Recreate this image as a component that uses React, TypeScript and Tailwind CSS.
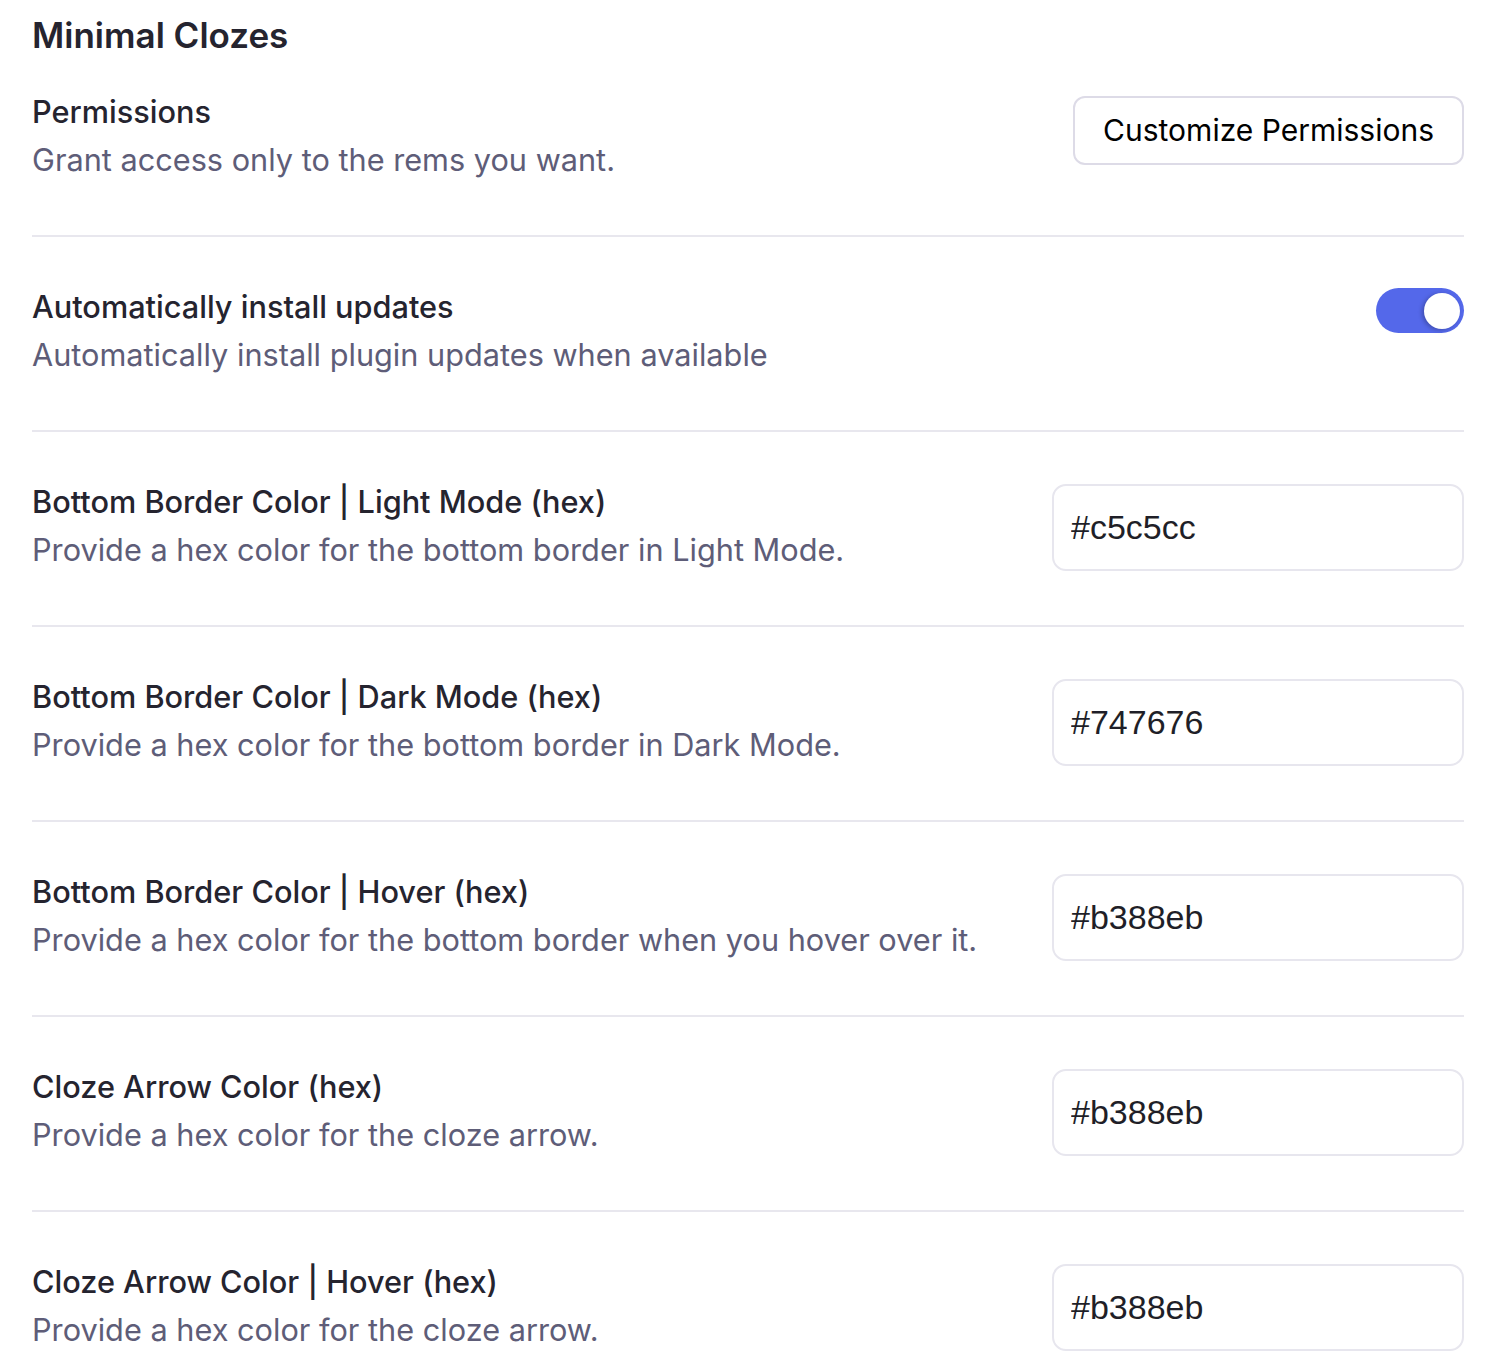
import { useState } from "react";

interface Setting {
  label: string;
  description: string;
  value: string;
}

const HEX_SETTINGS: Setting[] = [
  {
    label: "Bottom Border Color | Light Mode (hex)",
    description: "Provide a hex color for the bottom border in Light Mode.",
    value: "#c5c5cc",
  },
  {
    label: "Bottom Border Color | Dark Mode (hex)",
    description: "Provide a hex color for the bottom border in Dark Mode.",
    value: "#747676",
  },
  {
    label: "Bottom Border Color | Hover (hex)",
    description: "Provide a hex color for the bottom border when you hover over it.",
    value: "#b388eb",
  },
  {
    label: "Cloze Arrow Color (hex)",
    description: "Provide a hex color for the cloze arrow.",
    value: "#b388eb",
  },
  {
    label: "Cloze Arrow Color | Hover (hex)",
    description: "Provide a hex color for the cloze arrow.",
    value: "#b388eb",
  },
];

function Label({ title, description }: { title: string; description: string }) {
  return (
    <div className="flex flex-col">
      <div className="text-[30.7px] leading-[40px] font-medium text-[#25242f]">{title}</div>
      <div className="mt-[8px] text-[30.7px] leading-[40px] text-[#5e5d78]">{description}</div>
    </div>
  );
}

function HexInput({ initial }: { initial: string }) {
  const [value, setValue] = useState(initial);
  return (
    <input
      value={value}
      onChange={(e) => setValue(e.target.value)}
      className="mt-[2px] h-[87px] w-[412px] shrink-0 rounded-[14px] border-2 border-[#e7e6ee] bg-white px-[17px] text-[34px] text-[#1f1f28] outline-none"
      style={{ fontFamily: '"Liberation Sans", Arial, sans-serif' }}
    />
  );
}

export default function App() {
  const [autoUpdate, setAutoUpdate] = useState(true);

  return (
    <div className="min-h-screen bg-white pl-[32px] pr-[40px] pt-[15px]" style={{ fontFamily: "Inter, sans-serif" }}>
      <h1 className="text-[35px] leading-[40px] font-semibold text-[#25242f]">Minimal Clozes</h1>

      {/* Permissions */}
      <div className="flex items-start justify-between border-b-2 border-[#e8e7ee] pt-[37px] pb-[55px]">
        <Label title="Permissions" description="Grant access only to the rems you want." />
        <button className="mt-[4px] h-[69px] rounded-[12px] border-2 border-[#dddbe7] bg-white px-[28px] text-[30px] text-black">
          Customize Permissions
        </button>
      </div>

      {/* Auto update */}
      <div className="flex items-start justify-between border-b-2 border-[#e8e7ee] pt-[50px] pb-[55px]">
        <Label title="Automatically install updates" description="Automatically install plugin updates when available" />
        <button
          onClick={() => setAutoUpdate(!autoUpdate)}
          className={`mt-[1px] flex h-[45px] w-[88px] items-center rounded-full px-[4px] ${autoUpdate ? "justify-end bg-[#5468ea]" : "justify-start bg-[#d4d3de]"}`}
        >
          <span className="h-[36px] w-[36px] rounded-full bg-white shadow-[-2px_1px_4px_rgba(0,0,0,0.25)]" />
        </button>
      </div>

      {HEX_SETTINGS.map((s, i) => (
        <div
          key={i}
          className={`flex items-start justify-between pt-[50px] pb-[54px] ${i < HEX_SETTINGS.length - 1 ? "border-b-2 border-[#e8e7ee]" : ""}`}
        >
          <Label title={s.label} description={s.description} />
          <HexInput initial={s.value} />
        </div>
      ))}
    </div>
  );
}
